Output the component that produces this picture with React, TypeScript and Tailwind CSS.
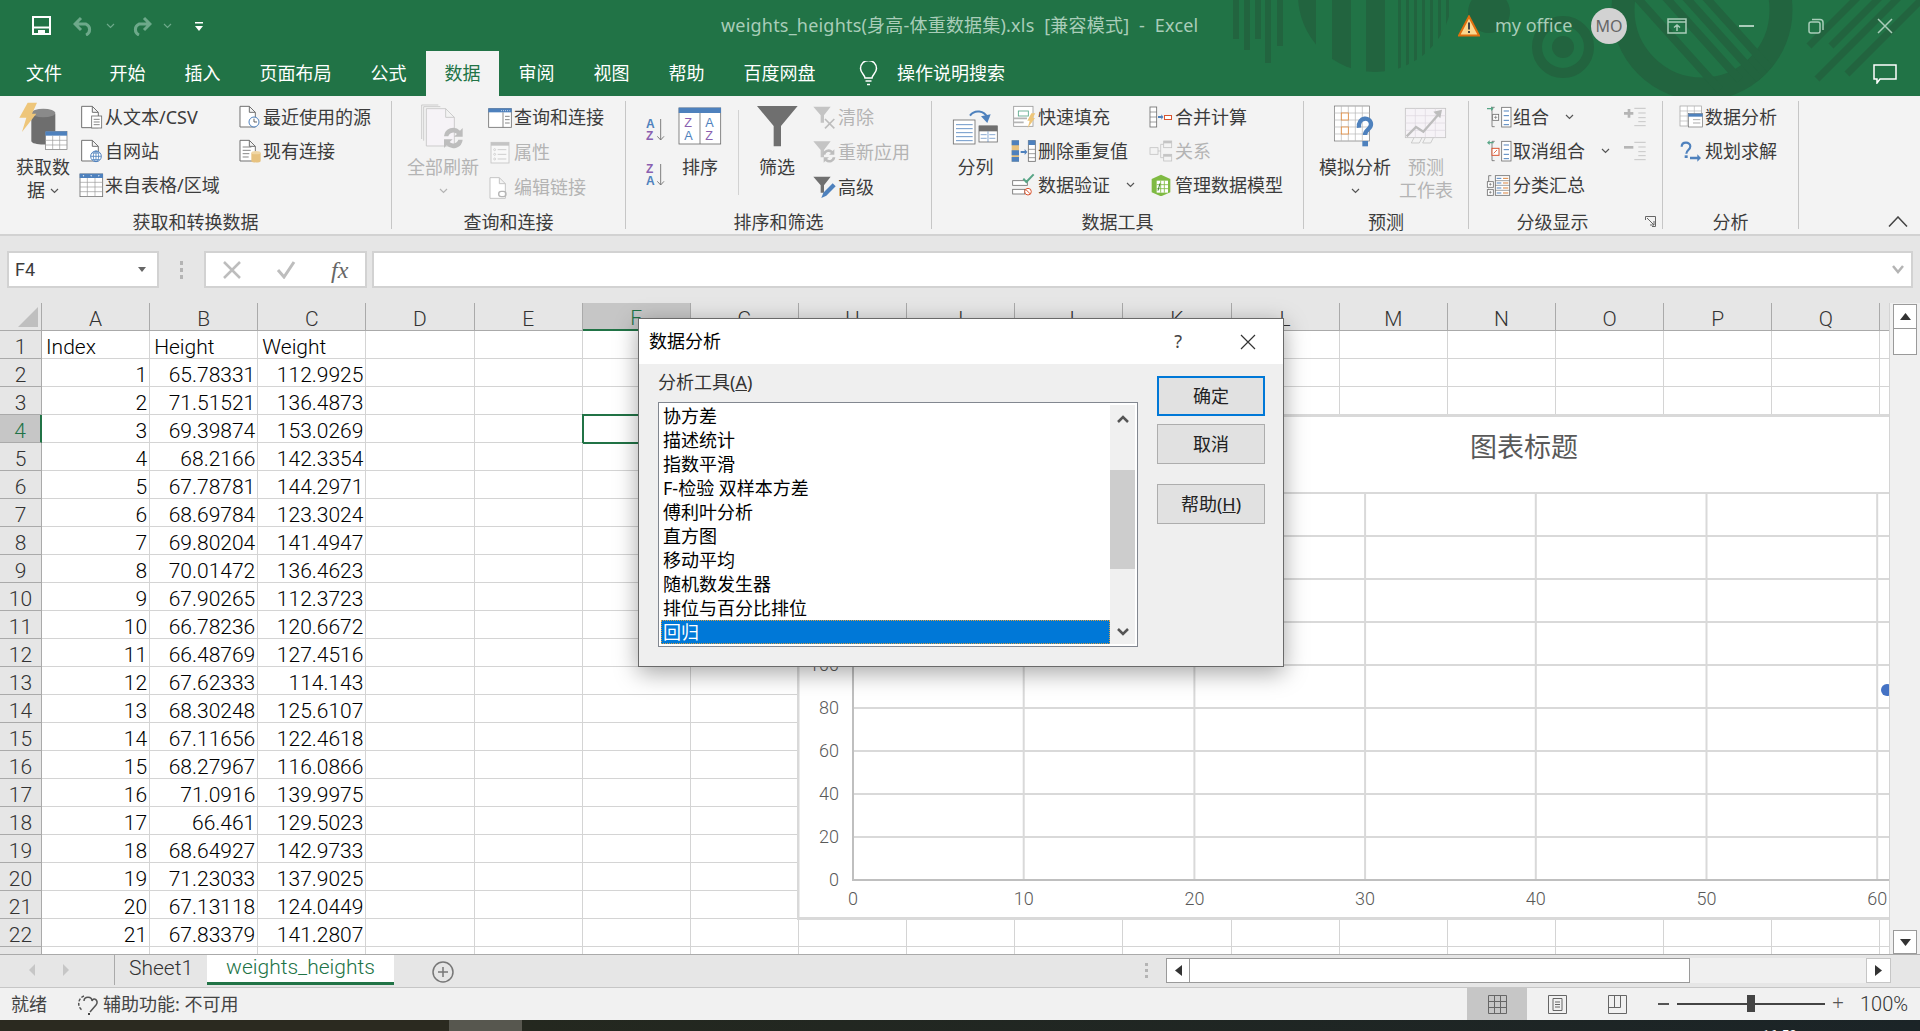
import React from "react";

const DOC = "#6f6f6f";
const BLUE = "#4e81bd";
const ORANGE = "#e7c27f";
const OFF = "#c4c4c4";

const rows: [string, string, string][] = [
  ["1", "65.78331", "112.9925"],
  ["2", "71.51521", "136.4873"],
  ["3", "69.39874", "153.0269"],
  ["4", "68.2166", "142.3354"],
  ["5", "67.78781", "144.2971"],
  ["6", "68.69784", "123.3024"],
  ["7", "69.80204", "141.4947"],
  ["8", "70.01472", "136.4623"],
  ["9", "67.90265", "112.3723"],
  ["10", "66.78236", "120.6672"],
  ["11", "66.48769", "127.4516"],
  ["12", "67.62333", "114.143"],
  ["13", "68.30248", "125.6107"],
  ["14", "67.11656", "122.4618"],
  ["15", "68.27967", "116.0866"],
  ["16", "71.0916", "139.9975"],
  ["17", "66.461", "129.5023"],
  ["18", "68.64927", "142.9733"],
  ["19", "71.23033", "137.9025"],
  ["20", "67.13118", "124.0449"],
  ["21", "67.83379", "141.2807"],
];
const letters = "ABCDEFGHIJKLMNOPQ".split("");
const listItems = ["协方差", "描述统计", "指数平滑", "F-检验 双样本方差", "傅利叶分析", "直方图", "移动平均", "随机数发生器", "排位与百分比排位"];

// svg whose coordinates are those of a 3x crop of the screenshot
const Ic = ({ x, y, w, h, children }: { x: number; y: number; w: number; h: number; children: React.ReactNode }) => (
  <svg width={w / 3} height={h / 3} viewBox={`${x} ${y} ${w} ${h}`} fill="none" className="block shrink-0">
    {children}
  </svg>
);

const Chev = ({ color = "#555" }: { color?: string }) => (
  <svg width="9" height="6" viewBox="0 0 9 6" fill="none" className="shrink-0">
    <path d="M1 1l3.5 3.5L8 1" stroke={color} strokeWidth="1.2" />
  </svg>
);

const docPath = (x: number, y: number, w: number, h: number, stroke: string) => (
  <path d={`M${x} ${y}h${w - 18}l18 18v${h - 18}h-${w}z M${x + w - 18} ${y}v18h18`} stroke={stroke} strokeWidth="3" fill="#fff" />
);

const GetDataIcon = () => (
  <Ic x={50} y={20} w={155} h={150}>
    <path d="M93 58v82c0 14 72 14 72 0V58z" fill="#6e6e6e" />
    <ellipse cx="129" cy="56" rx="36" ry="13" fill="#8a8a8a" />
    <path d="M82 25h28L95 58h13l-43 55 13-43H57z" fill="#eec67a" />
    <rect x="135" y="111" width="65" height="55" fill="#fff" stroke={DOC} strokeWidth="2" />
    <rect x="135" y="111" width="65" height="13" fill={BLUE} />
    <path d="M157 124v42M178 124v42M135 138h65M135 152h65" stroke="#9a9a9a" strokeWidth="2" />
  </Ic>
);
const FromTextIcon = () => (
  <Ic x={240} y={25} w={68} h={72}>
    {docPath(245, 29, 50, 64, DOC)}
    <rect x="275" y="58" width="30" height="36" fill="#fff" stroke={DOC} strokeWidth="2.5" />
    <path d="M281 68h18M281 76h18M281 84h18" stroke={DOC} strokeWidth="2.5" />
  </Ic>
);
const FromWebIcon = () => (
  <Ic x={240} y={126} w={68} h={72}>
    {docPath(245, 130, 50, 62, DOC)}
    <circle cx="288" cy="178" r="16" fill="#fff" stroke={BLUE} strokeWidth="3" />
    <path d="M272 178h32M288 162v32M277 168h22M277 188h22" stroke={BLUE} strokeWidth="2.5" />
    <ellipse cx="288" cy="178" rx="8" ry="16" stroke={BLUE} strokeWidth="2.5" />
  </Ic>
);
const FromTableIcon = () => (
  <Ic x={233} y={226} w={74} h={74}>
    <rect x="236" y="229" width="68" height="68" fill="#fff" stroke={DOC} strokeWidth="2.5" />
    <rect x="235" y="228" width="70" height="13" fill={BLUE} />
    <path d="M258 241v56M281 241v56M236 254h68M236 268h68M236 282h68" stroke="#999" strokeWidth="2" />
    <path d="M244 233h5l-2.500 4zM267 233h5l-2.500 4zM290 233h5l-2.500 4z" fill="#fff" />
  </Ic>
);
const RecentIcon = () => (
  <Ic x={710} y={25} w={70} h={72}>
    {docPath(716, 29, 46, 62, DOC)}
    <circle cx="758" cy="76" r="15" fill="#fff" stroke={BLUE} strokeWidth="3" />
    <path d="M758 66v10h9" stroke="#444" strokeWidth="2.500" />
  </Ic>
);
const ExistingIcon = () => (
  <Ic x={710} y={126} w={70} h={72}>
    {docPath(716, 130, 46, 62, DOC)}
    <path d="M724 150h26M724 160h24M724 170h20M724 180h18" stroke={DOC} strokeWidth="2.500" />
    <path d="M750 168v24c0 6 28 6 28 0v-24z" fill={ORANGE} />
    <ellipse cx="764" cy="167" rx="14" ry="5" fill="#f0d6a4" />
  </Ic>
);
const RefreshAllIcon = () => (
  <Ic x={1268} y={30} w={136} h={140}>
    <path d="M1273 36h50M1273 36v102M1279 41h50M1279 41v102" stroke={OFF} strokeWidth="2.500" />
    <path d="M1287 47h58l26 26v86h-84z M1345 47v26h26" stroke={OFF} strokeWidth="2.500" fill="#f6f3f7" />
    <path d="M1340 130a28 28 0 0 1 48-17l8-8v26h-26l9-8a16 16 0 0 0-26 7zM1396 140a28 28 0 0 1-48 17l-8 8v-26h26l-9 8a16 16 0 0 0 26-7z" fill="#bdbdbd" />
  </Ic>
);
const QueryIcon = () => (
  <Ic x={18} y={30} w={78} h={66}>
    <rect x="23" y="35" width="68" height="56" fill="#fff" stroke={DOC} strokeWidth="2.500" />
    <rect x="22" y="34" width="70" height="12" fill={BLUE} />
    <path d="M66 46v45" stroke={DOC} strokeWidth="2.500" />
    <path d="M72 58h14M72 68h14M72 78h14" stroke={DOC} strokeWidth="2.500" />
    <path d="M60 41h26" stroke="#fff" strokeWidth="2" strokeDasharray="3 3" />
  </Ic>
);
const PropsIcon = () => (
  <Ic x={26} y={132} w={66} h={70}>
    <rect x="32" y="136" width="54" height="62" fill="#f8f8f8" stroke={OFF} strokeWidth="2.500" />
    <rect x="32" y="136" width="54" height="10" fill={OFF} />
    <circle cx="43" cy="158" r="3" stroke={OFF} strokeWidth="2" />
    <circle cx="43" cy="172" r="3" stroke={OFF} strokeWidth="2" />
    <circle cx="43" cy="186" r="3" stroke={OFF} strokeWidth="2" />
    <path d="M52 158h26M52 172h26M52 186h26" stroke={OFF} strokeWidth="2.500" />
  </Ic>
);
const LinksIcon = () => (
  <Ic x={26} y={236} w={70} h={72}>
    {docPath(32, 241, 46, 62, OFF)}
    <path d="M60 296a8 8 0 0 1 8-8h6a8 8 0 0 1 0 16h-6M82 296a8 8 0 0 1-8 8h-6a8 8 0 0 1 0-16h6" stroke="#b5b5b5" strokeWidth="4" transform="translate(-2 -6)" />
  </Ic>
);
const SortIcon = ({ up }: { up: boolean }) => (
  <Ic x={494} y={62} w={62} h={74}>
    <text x="497" y="96" fontSize="36" fontWeight="700" fill={up ? BLUE : "#8a5fb0"} fontFamily="Liberation Sans">{up ? "A" : "Z"}</text>
    <text x="497" y="131" fontSize="36" fontWeight="700" fill={up ? "#8a5fb0" : BLUE} fontFamily="Liberation Sans">{up ? "Z" : "A"}</text>
    <path d="M541 68v62M531 120l10 11 10-11" stroke="#666" strokeWidth="2.500" />
  </Ic>
);
const SortBigIcon = () => (
  <Ic x={596} y={38} w={132} h={114}>
    <rect x="599" y="41" width="125" height="108" fill="#fff" stroke={DOC} strokeWidth="2.500" />
    <rect x="598" y="40" width="127" height="16" fill={BLUE} />
    <path d="M662 56v93" stroke={DOC} strokeWidth="2.500" />
    <text x="615" y="97" fontSize="38" fill="#8a5fb0" fontFamily="Liberation Sans">Z</text>
    <text x="615" y="137" fontSize="38" fill={BLUE} fontFamily="Liberation Sans">A</text>
    <text x="678" y="97" fontSize="38" fill={BLUE} fontFamily="Liberation Sans">A</text>
    <text x="678" y="137" fontSize="38" fill="#8a5fb0" fontFamily="Liberation Sans">Z</text>
  </Ic>
);
const FunnelIcon = () => (
  <Ic x={825} y={34} w={128} h={128}>
    <path d="M828 37h122l-50 60v61h-22V97z" fill="#6f6f6f" />
  </Ic>
);
const ClearIcon = () => (
  <Ic x={992} y={26} w={76} h={76}>
    <path d="M996 31h52l-20 26v22h-10V57z" fill={OFF} />
    <path d="M1031 68l28 28M1059 68l-28 28" stroke="#bdbdbd" strokeWidth="5" />
  </Ic>
);
const ReapplyIcon = () => (
  <Ic x={992} y={132} w={76} h={76}>
    <path d="M996 136h52l-20 26v22h-10V162z" fill={OFF} />
    <path d="M1024 176a18 18 0 0 1 30-11l5-5v16h-16l6-5a10 10 0 0 0-17 5zM1062 184a18 18 0 0 1-30 11l-5 5v-16h16l-6 5a10 10 0 0 0 17-5z" fill="#bdbdbd" />
  </Ic>
);
const AdvancedIcon = () => (
  <Ic x={992} y={236} w={76} h={76}>
    <path d="M996 241h52l-20 26v22h-10V267z" fill="#6f6f6f" />
    <path d="M1020 305l6-16 28-28 9 9-28 28z" fill={BLUE} />
  </Ic>
);
const TextToColIcon = () => (
  <Ic x={64} y={34} w={140} h={116}>
    <path d="M118 60a30 30 0 0 1 52 6" stroke={BLUE} strokeWidth="6" />
    <path d="M151 62l19 20 10-26z" fill={BLUE} />
    <rect x="68" y="73" width="65" height="72" fill="#fff" stroke={DOC} strokeWidth="2.500" />
    <path d="M76 87h50M76 99h50M76 111h50M76 123h50M76 135h50" stroke={BLUE} strokeWidth="2.500" />
    <rect x="145" y="91" width="55" height="48" fill="#fff" stroke={DOC} strokeWidth="2.500" />
    <rect x="145" y="90" width="55" height="17" fill="#6f6f6f" />
    <path d="M172 107v32M150 117h18M176 117h18M150 128h18M176 128h18" stroke={BLUE} strokeWidth="2" />
  </Ic>
);
const FlashFillIcon = () => (
  <Ic x={240} y={25} w={72} h={72}>
    <rect x="245" y="29" width="58" height="60" fill="#fff" stroke="#9a9a9a" strokeWidth="2.500" />
    <rect x="259" y="43" width="30" height="15" fill="#fff" stroke="#57a586" strokeWidth="2.500" />
    <path d="M245 65h40M245 77h30" stroke="#b5b5b5" strokeWidth="5" />
    <path d="M298 50h12l-8 14h7l-22 30 6-22h-7z" fill="#eec67a" />
  </Ic>
);
const RemoveDupIcon = () => (
  <Ic x={238} y={126} w={78} h={72}>
    <rect x="240" y="130" width="22" height="64" fill={ORANGE} />
    <path d="M240 130h22v15h-22zM240 160h22v15h-22zM240 180h22v14h-22z" fill={BLUE} />
    <rect x="290" y="131" width="21" height="62" fill="#fff" stroke={DOC} strokeWidth="2.500" />
    <rect x="290" y="130" width="21" height="14" fill={BLUE} />
    <path d="M290 157h21M290 170h21M290 182h21" stroke={DOC} strokeWidth="2" />
    <path d="M267 162h12v-6l8 9-8 9v-6h-12z" fill={BLUE} />
  </Ic>
);
const ValidationIcon = () => (
  <Ic x={240} y={226} w={74} h={72}>
    <rect x="245" y="249" width="44" height="14" fill="#fff" stroke={DOC} strokeWidth="2.500" />
    <rect x="245" y="275" width="36" height="14" fill="#fff" stroke={DOC} strokeWidth="2.500" />
    <path d="M277 243l9 10 22-23" stroke="#57a586" strokeWidth="6" />
    <circle cx="291" cy="282" r="10" fill="#fff" stroke="#d9542f" strokeWidth="3" />
    <path d="M284 275l14 14" stroke="#d9542f" strokeWidth="3" />
  </Ic>
);
const ConsolidateIcon = () => (
  <Ic x={650} y={26} w={48} h={66}>
    <rect x="653" y="29" width="20" height="60" fill="#fff" stroke={DOC} strokeWidth="2.500" />
    <path d="M653 44h20M653 59h20M653 74h20" stroke={DOC} strokeWidth="2" />
    <path d="M678 56h10v-5l6 8-6 8v-5h-10z" fill={BLUE} transform="translate(-1 0)" />
  </Ic>
);
const ConsolidateFull = () => (
  <span className="flex items-center">
    <ConsolidateIcon />
    <svg width="8" height="5" viewBox="0 0 8 5" className="-ml-px shrink-0"><rect x=".5" y=".5" width="7" height="4" fill="#fff" stroke="#d9542f" /></svg>
  </span>
);
const RelationIcon = () => (
  <Ic x={650} y={128} w={72} h={66}>
    <rect x="653" y="151" width="24" height="20" fill="#f3f3f3" stroke={OFF} strokeWidth="2.500" />
    <rect x="694" y="131" width="24" height="20" fill="#f3f3f3" stroke={OFF} strokeWidth="2.500" />
    <rect x="694" y="171" width="24" height="20" fill="#f3f3f3" stroke={OFF} strokeWidth="2.500" />
    <rect x="694" y="131" width="24" height="7" fill={OFF} />
    <rect x="694" y="171" width="24" height="7" fill={OFF} />
    <path d="M677 161h8M685 141v40M685 141h9M685 181h9" stroke={OFF} strokeWidth="2.500" />
  </Ic>
);
const ModelIcon = () => (
  <Ic x={652} y={230} w={66} h={68}>
    <path d="M657 245l28-13 28 13v40l-28 12-28-12z" fill="#7fba42" />
    <path d="M672 250h34v36h-34z" fill="#fff" />
    <path d="M684 250v36M695 250v36M672 262h34M672 274h34" stroke="#7fba42" strokeWidth="2.500" />
    <path d="M676 280l6-22" stroke="#3f7f30" strokeWidth="3" />
  </Ic>
);
const WhatIfIcon = () => (
  <Ic x={1218} y={40} w={134} h={126}>
    <rect x="1222" y="43" width="106" height="105" fill="#fff" stroke={DOC} strokeWidth="2" />
    <path d="M1243 43v105M1264 43v105M1285 43v105M1306 43v105M1222 64h106M1222 85h106M1222 106h106M1222 127h106" stroke="#b5b5b5" strokeWidth="2" />
    <rect x="1243" y="64" width="21" height="21" fill="#fff" stroke="#e08a3c" strokeWidth="2.500" />
    <rect x="1243" y="106" width="21" height="21" fill="#fff" stroke="#e08a3c" strokeWidth="2.500" />
    <path d="M1296 108c-4-34 36-34 36-10 0 16-18 14-18 32" stroke={BLUE} strokeWidth="13" />
    <rect x="1306" y="148" width="17" height="16" fill={BLUE} />
  </Ic>
);
const ForecastIcon = () => (
  <Ic x={1422} y={42} w={130} h={114}>
    <rect x="1426" y="46" width="121" height="88" fill="#f6f3f7" stroke={OFF} strokeWidth="2.500" />
    <path d="M1456 46v88M1486 46v88M1516 46v88M1426 68h121M1426 90h121M1426 112h121" stroke="#dcd6df" strokeWidth="2" />
    <path d="M1430 130l28-28 22 14 44-50" stroke="#bdbdbd" strokeWidth="7" />
    <path d="M1510 56l26-6-5 26z" fill="#bdbdbd" />
    <path d="M1452 134l-8 16h24l8-16M1486 134l-8 16h24l8-16" stroke={OFF} strokeWidth="2.500" />
  </Ic>
);
const GroupIcon = ({ un }: { un: boolean }) => (
  <Ic x={252} y={un ? 415 : 313} w={78} h={70}>
    <g transform={un ? "translate(0 102)" : undefined}>
      <path d="M278 320h-8v58h8" stroke={DOC} strokeWidth="2.500" />
      <rect x="299" y="320" width="28" height="59" fill="#fff" stroke={DOC} strokeWidth="2.500" />
      <path d="M305 331h16M305 345h16M305 359h16M305 372h16" stroke={BLUE} strokeWidth="3" />
      {un ? <rect x="270" y="341" width="21" height="21" fill="#fff" stroke="#d9542f" strokeWidth="3" /> : <rect x="272" y="341" width="18" height="18" fill="#fff" stroke={DOC} strokeWidth="2.500" />}
      {un ? <path d="M275 356l10-10" stroke="#d9542f" strokeWidth="2.500" /> : <path d="M276 350h10M281 345v10" stroke={DOC} strokeWidth="2" />}
      <path d={un ? "M275 322h-12v-5l-8 7 8 7v-5h12z" : "M255 322h12v-5l8 7-8 7v-5h-12z"} fill="#57a586" />
    </g>
  </Ic>
);
const SubtotalIcon = () => (
  <Ic x={252} y={516} w={76} h={68}>
    <path d="M268 521h-8v30M268 580h-8v-20" stroke={DOC} strokeWidth="2.500" />
    <rect x="256" y="539" width="18" height="17" fill="#fff" stroke={DOC} strokeWidth="2.500" />
    <rect x="256" y="563" width="18" height="17" fill="#fff" stroke={DOC} strokeWidth="2.500" />
    <path d="M261 547h8M265 543v8M261 571h8M265 567v8" stroke={DOC} strokeWidth="2" />
    <rect x="280" y="521" width="43" height="59" fill="#fff" stroke={DOC} strokeWidth="2.500" />
    <path d="M280 536h43M280 550h43M280 565h43" stroke={DOC} strokeWidth="2" />
    <path d="M284 529h14M284 543h14M284 558h14M284 573h14" stroke={BLUE} strokeWidth="3" />
    <path d="M303 529h16M303 543h16M303 558h16M303 573h16" stroke="#d9823c" strokeWidth="3" />
  </Ic>
);
const DetailIcon = ({ plus }: { plus: boolean }) => (
  <Ic x={666} y={316} w={72} h={60}>
    <path d="M700 320h34M712 334h22M712 348h22M700 372h34M712 360h22" stroke="#bdbdbd" strokeWidth="2.500" />
    <path d={plus ? "M680 322h8v9h9v8h-9v9h-8v-9h-11v-8h11z" : "M669 331h28v8h-28z"} fill="#b5b5b5" />
  </Ic>
);
const AnalysisIcon = () => (
  <Ic x={834} y={316} w={74} h={70}>
    <rect x="837" y="319" width="65" height="60" fill="#fff" stroke="#9a9a9a" strokeWidth="2" />
    <path d="M837 334h65M837 349h65M837 364h65M859 319v60M880 319v60" stroke="#b5b5b5" strokeWidth="2" />
    <rect x="862" y="342" width="43" height="40" fill="#fff" stroke={DOC} strokeWidth="2" />
    <rect x="862" y="342" width="43" height="9" fill={BLUE} />
    <path d="M876 360h22M876 370h22" stroke="#9a9a9a" strokeWidth="2.500" />
  </Ic>
);
const SolverIcon = () => (
  <Ic x={834} y={416} w={70} h={68}>
    <path d="M842 436c0-16 26-16 26-1 0 11-12 11-12 22" stroke={BLUE} strokeWidth="6.500" />
    <rect x="851" y="462" width="9" height="8" fill={BLUE} />
    <path d="M867 466h22v-7l11 11-11 11v-7h-22z" fill={BLUE} />
  </Ic>
);

const Small = ({ icon, box, text, off, chev }: { icon: React.ReactNode; box: string; text: string; off?: boolean; chev?: string }) => (
  <div className="flex h-full items-center whitespace-nowrap">
    <div className={`${box} flex shrink-0 items-center justify-center`}>{icon}</div>
    <span className={off ? "text-[#b4b4b4]" : "text-[#3c3c3c]"}>{text}</span>
    {chev ? <span className={chev}><Chev /></span> : null}
  </div>
);

const Big = ({ icon, className, lines, off, chev }: { icon: React.ReactNode; className: string; lines: string[]; off?: boolean; chev?: boolean }) => (
  <div className={`${className} flex flex-col items-center leading-[23px] whitespace-nowrap ${off ? "text-[#b4b4b4]" : "text-[#3c3c3c]"}`}>
    <div className="flex h-[60px] items-center justify-center">{icon}</div>
    {lines.map((l) => <span key={l}>{l}</span>)}
    {chev ? <span className="flex h-[23px] items-center"><Chev color={off ? "#b4b4b4" : "#555"} /></span> : null}
  </div>
);

const Group = ({ className, label, children, launcher }: { className: string; label: string; children: React.ReactNode; launcher?: boolean }) => (
  <div className={`${className} flex h-full shrink-0 flex-col`}>
    <div className="flex h-[112px]">{children}</div>
    <div className={`relative flex h-[27px] items-center justify-center pt-[3px] whitespace-nowrap text-[#3c3c3c] ${launcher ? "pr-[26px]" : ""}`}>
      {label}
      {launcher ? (
        <svg width="11" height="11" viewBox="0 0 11 11" fill="none" className="absolute right-[6px] bottom-[7px]">
          <path d="M.5 4V.5h10v10H7M2 2l7 7M5 9h4V5" stroke="#666" />
        </svg>
      ) : null}
    </div>
  </div>
);

const Sep = () => <div className="mt-[5px] h-[128px] w-px shrink-0 bg-[#c6c6c6]" />;

const TitlePattern = () => (
  <svg width="720" height="96" viewBox="1200 0 720 96" className="absolute top-0 left-[1200px]" fill="#22643f">
    <defs>
      <clipPath id="bigdisc"><circle cx="1375" cy="-5" r="77" /></clipPath>
      <clipPath id="ringdisc"><circle cx="1702" cy="10" r="90" /></clipPath>
      <clipPath id="band"><rect x="1200" y="0" width="720" height="96" /></clipPath>
    </defs>
    <rect x="1233" y="0" width="6" height="39" />
    <rect x="1244" y="0" width="6" height="50" />
    <rect x="1255" y="0" width="6" height="39" />
    <rect x="1265" y="0" width="6" height="63" />
    <rect x="1277" y="0" width="6" height="46" />
    <g clipPath="url(#bigdisc)">
      <rect x="1298" y="0" width="18" height="90" />
      <rect x="1332" y="0" width="19" height="90" />
      <rect x="1366" y="0" width="19" height="90" />
      <rect x="1398" y="0" width="3" height="90" />
      <rect x="1406" y="0" width="3" height="90" />
      <rect x="1414" y="0" width="3" height="90" />
      <rect x="1422" y="0" width="3" height="90" />
      <rect x="1430" y="0" width="3" height="90" />
      <rect x="1438" y="0" width="3" height="90" />
      <rect x="1446" y="0" width="3" height="90" />
      <rect x="1454" y="0" width="3" height="90" />
    </g>
    <circle cx="1489" cy="12" r="21" />
    <circle cx="1563" cy="47" r="26" fill="none" stroke="#22643f" strokeWidth="10" />
    <circle cx="1563" cy="47" r="11" />
    <g clipPath="url(#band)">
      <circle cx="1702" cy="10" r="79" fill="none" stroke="#22643f" strokeWidth="23" />
      <g clipPath="url(#ringdisc)" stroke="#22643f" strokeWidth="8" fill="none">
        <path d="M1630 -10l90 100M1650 -20l90 100M1670 -20l90 100M1690 -20l90 100" />
      </g>
      <g stroke="#22643f" strokeWidth="7" fill="none">
        <path d="M1809 46l52-52M1831 46l52-52M1817 79l90-90M1847 74l85-85" />
      </g>
    </g>
  </svg>
);

export default function App() {
  return (
    <div className="relative flex h-[1031px] w-[1920px] flex-col overflow-hidden bg-white font-['Noto_Sans','Noto_Sans_CJK_SC',sans-serif] text-[18px] text-[#3c3c3c]">
      {/* title bar and tabs */}
      <div className="relative h-[96px] shrink-0 bg-[#217346]">
        <TitlePattern />
        <div className="relative flex h-[51px] items-center">
          <div className="flex w-[721px] shrink-0 items-center pl-[32px]">
            <svg width="19" height="19" viewBox="0 0 19 19" fill="none" className="shrink-0">
              <path d="M1 1h17v17H1z" stroke="#fff" strokeWidth="2" />
              <path d="M1 11.500h17" stroke="#fff" strokeWidth="2" />
              <path d="M6 18v-4h7v4" fill="#fff" />
            </svg>
            <svg width="22" height="20" viewBox="0 0 22 20" fill="none" className="ml-[22px] shrink-0">
              <path d="M2 8h11a6 6 0 0 1 0 11M8 2L2 8l6 6" stroke="#6da98a" strokeWidth="3" />
            </svg>
            <span className="ml-[11px]"><Chev color="#6da98a" /></span>
            <svg width="22" height="20" viewBox="0 0 22 20" fill="none" className="ml-[15px] shrink-0">
              <path d="M20 8H9a6 6 0 0 0 0 11M14 2l6 6-6 6" stroke="#6da98a" strokeWidth="3" />
            </svg>
            <span className="ml-[11px]"><Chev color="#6da98a" /></span>
            <svg width="8" height="12" viewBox="0 0 8 12" className="ml-[23px] shrink-0">
              <path d="M0 2h8v1.500H0zM0 6h8l-4 5z" fill="#fff" />
            </svg>
          </div>
          <span className="tracking-[0.2px] whitespace-nowrap text-[#a9cdb9]">weights_heights(身高-体重数据集).xls&nbsp; [兼容模式]&nbsp; -&nbsp; Excel</span>
          <div className="ml-auto flex items-center pr-[27px]">
            <svg width="22" height="22" viewBox="0 0 22 22" className="shrink-0">
              <path d="M11 1.500L21 20.500H1z" fill="#fbd78e" stroke="#e0700f" strokeWidth="2" />
              <path d="M10 7.500h2v7h-2zM10 16h2v2h-2z" fill="#444" />
            </svg>
            <span className="ml-[15px] w-[96px] whitespace-nowrap text-[#a9cdb9]">my office</span>
            <div className="flex h-[36px] w-[36px] shrink-0 items-center justify-center rounded-full bg-[#d2d2d2] text-[16px] text-[#666]">MO</div>
            <svg width="20" height="16" viewBox="0 0 20 16" fill="none" className="ml-[40px] shrink-0">
              <path d="M1 1h18v14H1zM1 4h18M10 13V7M7 9.500L10 7l3 2.500" stroke="#a9cdb9" strokeWidth="1.500" />
            </svg>
            <svg width="15" height="2" viewBox="0 0 15 2" className="ml-[52px] shrink-0"><rect width="15" height="2" fill="#a9cdb9" /></svg>
            <svg width="16" height="16" viewBox="0 0 16 16" fill="none" className="ml-[54px] shrink-0">
              <rect x="1" y="4" width="11" height="11" rx="2" stroke="#a9cdb9" strokeWidth="1.500" />
              <path d="M4 1.500h8a3 3 0 0 1 3 3V12" stroke="#a9cdb9" strokeWidth="1.500" />
            </svg>
            <svg width="16" height="16" viewBox="0 0 16 16" fill="none" className="ml-[53px] shrink-0">
              <path d="M1 1l14 14M15 1L1 15" stroke="#a9cdb9" strokeWidth="1.500" />
            </svg>
          </div>
        </div>
        <div className="relative flex h-[45px] items-center text-white">
          <div className="pr-[28px] pl-[26px]">文件</div>
          <div className="px-[19.5px]">开始</div>
          <div className="px-[19.5px]">插入</div>
          <div className="px-[19.5px]">页面布局</div>
          <div className="px-[19.5px]">公式</div>
          <div className="flex h-full items-center bg-[#f3f3f3] px-[18.5px] text-[#217346]">数据</div>
          <div className="px-[19.5px]">审阅</div>
          <div className="px-[19.5px]">视图</div>
          <div className="px-[19.5px]">帮助</div>
          <div className="px-[19.5px]">百度网盘</div>
          <svg width="19" height="25" viewBox="0 0 19 25" fill="none" className="ml-[24px] shrink-0">
            <path d="M6 17c0-3-4.500-5-4.500-9.500a8 8 0 0 1 16 0C17.500 12 13 14 13 17zM6.500 20h6M8 23.500h3" stroke="#fff" strokeWidth="1.500" />
          </svg>
          <span className="ml-[19px]">操作说明搜索</span>
          <svg width="24" height="20" viewBox="0 0 24 20" fill="none" className="mr-[23px] ml-auto shrink-0">
            <path d="M1 1h22v14H7l-3 4v-4H1z" stroke="#fff" strokeWidth="1.500" />
          </svg>
        </div>
      </div>

      {/* ribbon */}
      <div className="flex h-[140px] shrink-0 border-b-2 border-[#d2d2d2] bg-[#f3f3f3]">
        <Group className="w-[391px]" label="获取和转换数据">
          <div className="ml-[16px] flex w-[54px] shrink-0 flex-col items-center leading-[23px] whitespace-nowrap">
            <div className="flex h-[60px] items-center justify-center"><GetDataIcon /></div>
            <span>获取数</span>
            <span className="flex items-center gap-[5px]">据<Chev /></span>
          </div>
          <div className="ml-[8px] flex w-[158px] shrink-0 flex-col pt-[4px]">
            <div className="h-[34px]"><Small box="w-[27px]" icon={<FromTextIcon />} text="从文本/CSV" /></div>
            <div className="h-[34px]"><Small box="w-[27px]" icon={<FromWebIcon />} text="自网站" /></div>
            <div className="h-[34px]"><Small box="w-[27px]" icon={<FromTableIcon />} text="来自表格/区域" /></div>
          </div>
          <div className="flex flex-col pt-[4px]">
            <div className="h-[34px]"><Small box="w-[27px]" icon={<RecentIcon />} text="最近使用的源" /></div>
            <div className="h-[34px]"><Small box="w-[27px]" icon={<ExistingIcon />} text="现有连接" /></div>
          </div>
        </Group>
        <Sep />
        <Group className="w-[233px]" label="查询和连接">
          <Big className="ml-[15px] w-[72px]" icon={<RefreshAllIcon />} lines={["全部刷新"]} off chev />
          <div className="ml-[6px] flex flex-col pt-[4px]">
            <div className="h-[35px]"><Small box="w-[29px]" icon={<QueryIcon />} text="查询和连接" /></div>
            <div className="h-[35px]"><Small box="w-[29px]" icon={<PropsIcon />} text="属性" off /></div>
            <div className="h-[35px]"><Small box="w-[29px]" icon={<LinksIcon />} text="编辑链接" off /></div>
          </div>
        </Group>
        <Sep />
        <Group className="w-[305px]" label="排序和筛选">
          <div className="ml-[19px] flex w-[33px] shrink-0 flex-col pt-[21px]">
            <div className="h-[45px]"><SortIcon up /></div>
            <SortIcon up={false} />
          </div>
          <Big className="w-[44px]" icon={<SortBigIcon />} lines={["排序"]} />
          <div className="mt-[14px] ml-[16px] h-[85px] w-px shrink-0 bg-[#d2d2d2]" />
          <Big className="ml-[16px] w-[44px]" icon={<FunnelIcon />} lines={["筛选"]} />
          <div className="ml-[12px] flex flex-col pt-[4px]">
            <div className="h-[35px]"><Small box="w-[27px]" icon={<ClearIcon />} text="清除" off /></div>
            <div className="h-[35px]"><Small box="w-[27px]" icon={<ReapplyIcon />} text="重新应用" off /></div>
            <div className="h-[35px]"><Small box="w-[27px]" icon={<AdvancedIcon />} text="高级" /></div>
          </div>
        </Group>
        <Sep />
        <Group className="w-[371px]" label="数据工具">
          <Big className="ml-[20px] w-[47px]" icon={<TextToColIcon />} lines={["分列"]} />
          <div className="ml-[10px] flex w-[137px] shrink-0 flex-col pt-[4px]">
            <div className="h-[34px]"><Small box="w-[29px]" icon={<FlashFillIcon />} text="快速填充" /></div>
            <div className="h-[34px]"><Small box="w-[29px]" icon={<RemoveDupIcon />} text="删除重复值" /></div>
            <div className="h-[34px]"><Small box="w-[29px]" icon={<ValidationIcon />} text="数据验证" chev="ml-[16px]" /></div>
          </div>
          <div className="flex flex-col pt-[4px]">
            <div className="h-[34px]"><Small box="w-[29px]" icon={<ConsolidateFull />} text="合并计算" /></div>
            <div className="h-[34px]"><Small box="w-[29px]" icon={<RelationIcon />} text="关系" off /></div>
            <div className="h-[34px]"><Small box="w-[29px]" icon={<ModelIcon />} text="管理数据模型" /></div>
          </div>
        </Group>
        <Sep />
        <Group className="w-[164px]" label="预测">
          <Big className="ml-[15px] w-[72px]" icon={<WhatIfIcon />} lines={["模拟分析"]} chev />
          <Big className="ml-[8px] w-[54px]" icon={<ForecastIcon />} lines={["预测", "工作表"]} off />
        </Group>
        <Sep />
        <Group className="w-[193px]" label="分级显示" launcher>
          <div className="ml-[15px] flex w-[139px] shrink-0 flex-col pt-[4px]">
            <div className="h-[34px]"><Small box="w-[29px]" icon={<GroupIcon un={false} />} text="组合" chev="ml-[16px]" /></div>
            <div className="h-[34px]"><Small box="w-[29px]" icon={<GroupIcon un />} text="取消组合" chev="ml-[16px]" /></div>
            <div className="h-[34px]"><Small box="w-[29px]" icon={<SubtotalIcon />} text="分类汇总" /></div>
          </div>
          <div className="flex flex-col pt-[4px]">
            <div className="flex h-[34px] items-center"><DetailIcon plus /></div>
            <div className="flex h-[34px] items-center"><DetailIcon plus={false} /></div>
          </div>
        </Group>
        <Sep />
        <Group className="w-[135px]" label="分析">
          <div className="ml-[14px] flex flex-col pt-[4px]">
            <div className="h-[34px]"><Small box="w-[28px]" icon={<AnalysisIcon />} text="数据分析" /></div>
            <div className="h-[34px]"><Small box="w-[28px]" icon={<SolverIcon />} text="规划求解" /></div>
          </div>
        </Group>
        <Sep />
        <div className="flex flex-1 items-end justify-end pr-[12px] pb-[7px]">
          <svg width="20" height="11" viewBox="0 0 20 11" fill="none"><path d="M1 10.500L10 1l9 9.500" stroke="#444" strokeWidth="1.500" /></svg>
        </div>
      </div>

      {/* formula bar */}
      <div className="flex h-[67px] shrink-0 bg-[#e6e6e6] pt-[15px] pb-[15px]">
        <div className="ml-[7px] flex w-[152px] items-center justify-between border-2 border-[#d2d2d2] bg-white pr-[11px] pl-[6px] font-['Roboto',sans-serif] text-[18px]">
          F4
          <svg width="8" height="5" viewBox="0 0 8 5"><path d="M0 0h8L4 5z" fill="#666" /></svg>
        </div>
        <div className="flex w-[45px] flex-col items-center justify-center gap-[3px]">
          <span className="h-[4px] w-[3px] bg-[#b4b4b4]" />
          <span className="h-[4px] w-[3px] bg-[#b4b4b4]" />
          <span className="h-[4px] w-[3px] bg-[#b4b4b4]" />
        </div>
        <div className="flex w-[163px] items-center border-2 border-[#d2d2d2] bg-white">
          <svg width="18" height="18" viewBox="0 0 18 18" fill="none" className="ml-[17px] shrink-0"><path d="M1 1l16 16M17 1L1 17" stroke="#bdbdbd" strokeWidth="2.500" /></svg>
          <svg width="20" height="18" viewBox="0 0 20 18" fill="none" className="ml-[35px] shrink-0"><path d="M2 9l6 7L18 1" stroke="#bdbdbd" strokeWidth="3" /></svg>
          <span className="ml-[35px] font-['Liberation_Serif',serif] text-[24px] text-[#666] italic">fx</span>
        </div>
        <div className="ml-[5px] flex w-[1541px] items-center justify-end border-2 border-[#d2d2d2] bg-white pr-[7px]">
          <svg width="12" height="9" viewBox="0 0 12 9" fill="none"><path d="M1 1l5 6 5-6" stroke="#b4b4b4" strokeWidth="2.500" /></svg>
        </div>
      </div>

      {/* sheet */}
      <div className="flex h-[651px] shrink-0">
        <div className="relative w-[1889px] shrink-0 overflow-hidden">
          <div className="grid auto-rows-[28px] grid-cols-[42px_repeat(17,108.15px)_1fr] font-['Roboto',sans-serif] text-[21px] font-light text-black">
            <div className="flex items-center justify-end border-r border-b border-[#aaa] bg-[#e6e6e6] pr-[3px]">
              <svg width="20" height="20" viewBox="0 0 20 20"><path d="M20 0v20H0z" fill="#bfbfbf" /></svg>
            </div>
            {letters.map((c) => (
              <div key={c} className={`flex items-center justify-center pt-[6px] text-[#333] ${c === "F" ? "border-r border-b-2 border-r-[#aaa] border-b-[#217346] bg-[#c6c6c6] text-[#217346]" : "border-r border-b border-[#aaa] bg-[#e6e6e6]"}`}>{c}</div>
            ))}
            <div className="border-b border-[#aaa] bg-[#e6e6e6]" />
            {Array.from({ length: 23 }, (_, i) => {
              const n = i + 1;
              const d = i === 0 ? null : rows[i - 1];
              const cells: (string | undefined)[] = i === 0 ? ["Index", "Height", "Weight"] : d ? [d[0], d[1], d[2]] : [];
              return (
                <React.Fragment key={n}>
                  <div className={`flex items-center justify-center pt-[6px] text-[#333] ${n === 4 ? "border-r-2 border-b border-r-[#217346] border-b-[#aaa] bg-[#c6c6c6] text-[#217346]" : "border-r border-b border-[#aaa] bg-[#e6e6e6]"}`}>{n < 23 ? n : ""}</div>
                  {letters.map((c, ci) => (
                    <div key={c} className={`flex items-center overflow-hidden border-r border-b border-[#d4d4d4] pt-[6px] pr-[2px] pl-[4px] whitespace-nowrap ${i === 0 ? "justify-start" : "justify-end"} ${n === 4 && c === "F" ? "outline-2 -outline-offset-1 outline-[#217346]" : ""}`}>{cells[ci]}</div>
                  ))}
                  <div className="border-b border-[#d4d4d4]" />
                </React.Fragment>
              );
            })}
          </div>

          {/* floating chart */}
          <svg width="1092" height="506" viewBox="0 0 1092 506" className="absolute top-[111px] left-[797px] bg-white">
            <path d="M0 1.500H1092M0 504.500H1092M1 0V506" stroke="#d9d9d9" strokeWidth="3" />
            <text x="727" y="43" textAnchor="middle" fontSize="27" fill="#595959" fontFamily="Noto Sans CJK SC">图表标题</text>
            {Array.from({ length: 10 }, (_, i) => (
              <g key={i}>
                {i < 9 ? <path d={`M56 ${79 + i * 43}H1092`} stroke="#d9d9d9" strokeWidth="2" /> : null}
                <text x="42" y={472 - i * 43} textAnchor="end" fontSize="18" fill="#595959" fontFamily="Roboto" fontWeight="300">{i * 20}</text>
              </g>
            ))}
            {[0, 10, 20, 30, 40, 50, 60].map((v, i) => (
              <g key={v}>
                {i > 0 ? <path d={`M${56 + i * 170.7} 78V466`} stroke="#d9d9d9" strokeWidth="2" /> : null}
                <text x={56 + i * 170.7} y="491" textAnchor="middle" fontSize="18" fill="#595959" fontFamily="Roboto" fontWeight="300">{v}</text>
              </g>
            ))}
            <path d="M56 78V466H1092" stroke="#bfbfbf" strokeWidth="2" fill="none" />
            <circle cx="1090" cy="276" r="6" fill="#4472c4" />
          </svg>
        </div>
        {/* vertical scrollbar */}
        <div className="flex flex-1 flex-col items-center border-l border-[#d4d4d4] bg-[#f0f0f0] pt-px">
          <div className="flex h-[25px] w-[24px] items-center justify-center border border-[#9a9a9a] bg-white">
            <svg width="11" height="7" viewBox="0 0 11 7"><path d="M5.500 0L11 7H0z" fill="#333" /></svg>
          </div>
          <div className="h-[26px] w-[24px] border border-t-0 border-[#9a9a9a] bg-white" />
          <div className="mt-auto flex h-[24px] w-[24px] items-center justify-center border border-[#9a9a9a] bg-white">
            <svg width="11" height="7" viewBox="0 0 11 7"><path d="M5.500 7L11 0H0z" fill="#333" /></svg>
          </div>
        </div>
      </div>

      {/* sheet tabs */}
      <div className="flex h-[33px] shrink-0 items-start border-t border-[#aaa] bg-[#e6e6e6]">
        <div className="flex h-[30px] w-[115px] shrink-0 items-center justify-start border-r border-[#aaa] pl-[29px]">
          <svg width="6" height="12" viewBox="0 0 6 12"><path d="M6 0v12L0 6z" fill="#c6c6c6" /></svg>
          <svg width="6" height="12" viewBox="0 0 6 12" className="ml-[28px]"><path d="M0 0v12l6-6z" fill="#c6c6c6" /></svg>
        </div>
        <div className="flex h-[30px] w-[92px] shrink-0 items-center justify-center pb-[3px] font-['Roboto',sans-serif] text-[21px] font-light text-[#333]">Sheet1</div>
        <div className="flex h-[30px] w-[187px] shrink-0 items-center justify-center border-b-[3px] border-[#217346] bg-white pb-[2px] font-['Roboto',sans-serif] text-[21px] font-light text-[#217346]">weights_heights</div>
        <svg width="22" height="22" viewBox="0 0 22 22" fill="none" className="mt-[6px] ml-[38px] shrink-0">
          <circle cx="11" cy="11" r="10" stroke="#777" strokeWidth="1.500" />
          <path d="M6 11h10M11 6v10" stroke="#777" strokeWidth="1.500" />
        </svg>
        <div className="mt-[8px] ml-[691px] flex w-[3px] shrink-0 flex-col gap-[3px]">
          <span className="h-[3px] w-[3px] bg-[#b4b4b4]" />
          <span className="h-[3px] w-[3px] bg-[#b4b4b4]" />
          <span className="h-[3px] w-[3px] bg-[#b4b4b4]" />
        </div>
        <div className="mt-[3px] ml-[18px] flex h-[25px] w-[725px] shrink-0 bg-[#f0f0f0]">
          <div className="flex h-full w-[24px] items-center justify-center border border-[#9a9a9a] bg-white">
            <svg width="7" height="11" viewBox="0 0 7 11"><path d="M7 0v11L0 5.500z" fill="#333" /></svg>
          </div>
          <div className="h-full w-[500px] border-y border-r border-[#9a9a9a] bg-white" />
          <div className="flex-1" />
          <div className="flex h-full w-[25px] items-center justify-center border border-[#c6c6c6] bg-white">
            <svg width="7" height="11" viewBox="0 0 7 11"><path d="M0 0v11l7-5.500z" fill="#333" /></svg>
          </div>
        </div>
      </div>

      {/* status bar */}
      <div className="flex h-[33px] shrink-0 items-center border-t border-[#c6c6c6] bg-[#f1f1f1] text-[18px] text-[#444]">
        <span className="ml-[11px]">就绪</span>
        <svg width="24" height="24" viewBox="0 0 24 24" fill="none" className="ml-[29px] shrink-0">
          <path d="M8 4a8 8 0 0 0-2 14" stroke="#555" strokeWidth="1.500" strokeDasharray="3 1.500" />
          <path d="M8 9c0-5 8-5 8 0 2-5 7 0 4 4l-6 7" stroke="#555" strokeWidth="1.500" />
          <rect x="12" y="21" width="2" height="2" fill="#444" />
        </svg>
        <span className="ml-[3px]">辅助功能: 不可用</span>
        <div className="ml-auto flex h-full items-center">
          <div className="flex h-full w-[60px] items-center justify-center bg-[#c6c6c6]">
            <svg width="19" height="19" viewBox="0 0 19 19" fill="none"><path d="M.5.500h18v18H.5zM.5 6.500h18M.5 12.500h18M6.500.500v18M12.500.500v18" stroke="#666" /></svg>
          </div>
          <div className="flex h-full w-[60px] items-center justify-center">
            <svg width="19" height="19" viewBox="0 0 19 19" fill="none"><path d="M.5.500h18v18H.5zM5 3.500h9v12H5zM7 7h5M7 9.500h5M7 12h5" stroke="#666" /></svg>
          </div>
          <div className="flex h-full w-[60px] items-center justify-center">
            <svg width="19" height="19" viewBox="0 0 19 19" fill="none"><path d="M.5.500h18v18H.5zM.5 12.500h12V.500M6.500.500v12" stroke="#666" /></svg>
          </div>
          <span className="ml-[11px] h-[1.500px] w-[11px] bg-[#555]" />
          <div className="relative ml-[8px] h-[2px] w-[148px] bg-[#444]">
            <span className="absolute top-[-8px] left-[70px] h-[17px] w-[8px] bg-[#444]" />
          </div>
          <span className="ml-[7px] text-[21px] font-light text-[#555]">+</span>
          <span className="ml-[16px] w-[60px] font-['Roboto',sans-serif] text-[20px] font-light text-[#333]">100%</span>
        </div>
      </div>

      {/* desktop strip peeking out below the window */}
      <div className="flex flex-1 overflow-hidden">
        <div className="w-[449px] bg-[#2b2a20]" />
        <div className="w-[73px] bg-[#57574f]" />
        <div className="flex flex-1 bg-gradient-to-r from-[#24281f] to-[#1b2427]">
          <span className="mt-[8px] ml-[1240px] font-['Roboto',sans-serif] text-[14px] leading-[16px] text-white">16:53</span>
        </div>
      </div>

      {/* data analysis dialog */}
      <div className="absolute top-[318px] left-[638px] flex h-[349px] w-[646px] flex-col border border-[#6a6a6a] bg-[#efefef] text-black shadow-[0_6px_22px_rgba(0,0,0,0.35)]">
        <div className="flex h-[45px] shrink-0 items-center bg-white pl-[10px]">
          <span>数据分析</span>
          <span className="ml-auto text-[#444]">?</span>
          <svg width="16" height="16" viewBox="0 0 16 16" fill="none" className="mr-[27px] ml-[58px]"><path d="M1 1l14 14M15 1L1 15" stroke="#333" strokeWidth="1.200" /></svg>
        </div>
        <div className="flex flex-1 pt-[5px] pl-[19px]">
          <div className="w-[480px] shrink-0">
            <div className="h-[26px] leading-[26px] text-[#333]">分析工具(<span className="underline">A</span>)</div>
            <div className="mt-[7px] flex h-[245px] border border-[#828790] bg-white p-[2px]">
              <div className="-mt-px flex min-w-0 flex-1 flex-col leading-[24px]">
                {listItems.map((t) => <div key={t} className="h-[24px] pl-[2px] whitespace-nowrap">{t}</div>)}
                <div className="h-[24px] border border-dotted border-[#e0a040] bg-[#0078d7] pl-[1px] leading-[22px] text-white">回归</div>
              </div>
              <div className="flex w-[25px] shrink-0 flex-col items-center bg-[#f0f0f0]">
                <svg width="12" height="8" viewBox="0 0 12 8" fill="none" className="mt-[10px]"><path d="M1 7l5-5 5 5" stroke="#555" strokeWidth="2.500" /></svg>
                <div className="mt-[47px] h-[99px] w-full bg-[#cdcdcd]" />
                <svg width="12" height="8" viewBox="0 0 12 8" fill="none" className="mt-[59px]"><path d="M1 1l5 5 5-5" stroke="#555" strokeWidth="2.500" /></svg>
              </div>
            </div>
          </div>
          <div className="ml-[19px] flex w-[108px] shrink-0 flex-col pt-[7px] text-[#222]">
            <div className="flex h-[40px] items-center justify-center border-2 border-[#0078d7] bg-[#e1e1e1]">确定</div>
            <div className="mt-[8px] flex h-[40px] items-center justify-center border border-[#adadad] bg-[#e1e1e1]">取消</div>
            <div className="mt-[20px] flex h-[40px] items-center justify-center border border-[#adadad] bg-[#e1e1e1]">帮助(<span className="underline">H</span>)</div>
          </div>
        </div>
      </div>
    </div>
  );
}
